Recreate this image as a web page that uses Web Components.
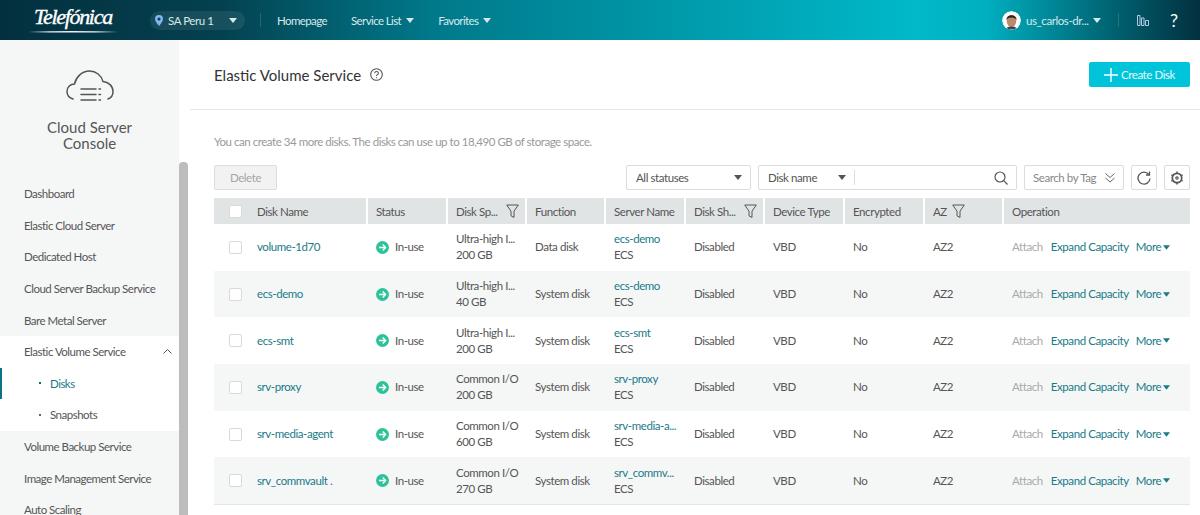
<!DOCTYPE html>
<html lang="en">
<head>
<meta charset="utf-8">
<title>Elastic Volume Service</title>
<style>
  html, body { margin: 0; height: 100%; overflow: hidden; background: #fff; }
  body { display: flex; flex-direction: column; font: 11.5px "Lato", "Liberation Sans", sans-serif; letter-spacing: -.42px; color: #555; }
  .page { display: flex; flex: 1; min-height: 0; }
</style>
</head>
<body>
<tf-header></tf-header>
<div class="page">
  <side-nav title-text="Cloud Server Console">
    <side-item>Dashboard</side-item>
    <side-item>Elastic Cloud Server</side-item>
    <side-item>Dedicated Host</side-item>
    <side-item>Cloud Server Backup Service</side-item>
    <side-item>Bare Metal Server</side-item>
    <side-group label="Elastic Volume Service">
      <side-item sub active>Disks</side-item>
      <side-item sub>Snapshots</side-item>
    </side-group>
    <side-item>Volume Backup Service</side-item>
    <side-item>Image Management Service</side-item>
    <side-item>Auto Scaling</side-item>
  </side-nav>
  <evs-main>
    <disk-table>
      <disk-row name="volume-1d70" kind="Ultra-high I..." size="200 GB" fn="Data disk" server="ecs-demo"></disk-row>
      <disk-row name="ecs-demo" kind="Ultra-high I..." size="40 GB" fn="System disk" server="ecs-demo" striped></disk-row>
      <disk-row name="ecs-smt" kind="Ultra-high I..." size="200 GB" fn="System disk" server="ecs-smt"></disk-row>
      <disk-row name="srv-proxy" kind="Common I/O" size="200 GB" fn="System disk" server="srv-proxy" striped></disk-row>
      <disk-row name="srv-media-agent" kind="Common I/O" size="600 GB" fn="System disk" server="srv-media-a..."></disk-row>
      <disk-row name="srv_commvault ." kind="Common I/O" size="270 GB" fn="System disk" server="srv_commv..." striped></disk-row>
    </disk-table>
  </evs-main>
</div>

<script>
const CARET = `<svg width="8" height="5" viewBox="0 0 8 5" aria-hidden="true"><path d="M0 0h8L4 5z" fill="currentColor"/></svg>`;
const FUNNEL = `<svg width="13" height="15" viewBox="0 0 13 15" fill="none" stroke="#555" aria-hidden="true"><path d="M.7 1h11.6L8 7.2v6.200l-3-1.600V7.2z"/></svg>`;

class TfHeader extends HTMLElement {
  constructor() {
    super();
    this.attachShadow({ mode: "open" });
    this.shadowRoot.innerHTML = `
      <style>
        :host { display: flex; align-items: center; height: 40px; flex: none; color: #d8e8ec;
          background: linear-gradient(90deg, #03303f 0, #04404f 18%, #00798a 36%, #00b9c9 76%, #00b0c1 82%, #00606f 93%, #03303f 100%); }
        .logo { width: 122px; margin-left: 28px; position: relative; height: 40px; }
        .logo b { display: block; font: italic 400 22px/33px "Liberation Serif", serif; color: #fff; letter-spacing: -1.300px; padding-left: 6px; -webkit-text-stroke: .4px #fff; }
        .logo svg { position: absolute; left: 0; top: 30px; }
        .region { display: flex; align-items: center; width: 95px; height: 19px; box-sizing: border-box; padding: 0 8px 0 5px;
          border-radius: 10px; background: rgba(255,255,255,.08); }
        .region span { margin-left: 5px; flex: 1; }
        .sep { width: 1px; height: 14px; background: rgba(255,255,255,.14); }
        nav { display: flex; margin-left: 16px; letter-spacing: -.6px; }
        nav a { display: flex; align-items: center; gap: 5px; margin-right: 24px; }
        .right { display: flex; align-items: center; margin-left: auto; }
        .avatar { width: 19px; height: 19px; border-radius: 50%; margin-right: 5px; }
        .user { width: 67px; white-space: nowrap; }
        .right .sep { margin: 0 18px 0 17px; }
        .help { font-size: 18px; color: #fff; margin: 0 22px 0 21px; letter-spacing: 0; }
      </style>
      <div class="logo"><b>Telefónica</b>
        <svg width="90" height="3" viewBox="0 0 90 3"><path d="M0 2Q45 0 90 2Q45 3 0 2z" fill="#e8f2f4"/></svg>
      </div>
      <div class="region">
        <svg width="8" height="11" viewBox="0 0 8 11"><path d="M4 0a4 4 0 0 1 4 4c0 2.600-4 7-4 7S0 6.600 0 4a4 4 0 0 1 4-4z" fill="#7db8f2"/><circle cx="4" cy="4" r="1.600" fill="#123f50"/></svg>
        <span>SA Peru 1</span>${CARET}
      </div>
      <i class="sep" style="margin-left:15px"></i>
      <nav>
        <a>Homepage</a>
        <a>Service List ${CARET}</a>
        <a>Favorites ${CARET}</a>
      </nav>
      <div class="right">
        <svg class="avatar" viewBox="0 0 19 19">
          <circle cx="9.500" cy="9.500" r="9.500" fill="#fff"/>
          <ellipse cx="9.500" cy="10" rx="4.800" ry="6" fill="#b98a6c"/>
          <path d="M4.400 9C3.800 2.500 15.200 2.500 14.600 9c-1-3-8.500-3.500-10.200 0z" fill="#2b2320"/>
          <path d="M5 16.500c2-1.200 7-1.200 9 0l-1 2H6z" fill="#3c4650"/>
        </svg>
        <span class="user">us_carlos-dr...</span>${CARET}
        <i class="sep"></i>
        <svg width="12" height="12" viewBox="0 0 12 12" fill="none" stroke="#b4c8e6"><path d="M.5 11.500V1.500h2.500v10zM4.500 11.500V4h2.500v7.500zM8.500 11.500V6.500h3v5z"/></svg>
        <span class="help">?</span>
      </div>`;
  }
}

class SideNav extends HTMLElement {
  constructor() {
    super();
    this.attachShadow({ mode: "open" });
    this.shadowRoot.innerHTML = `
      <style>
        :host { display: flex; flex: none; width: 190px; min-height: 0; overflow: hidden; }
        .panel { width: 179px; background: #f5f7f7; overflow: hidden; letter-spacing: -.5px; }
        .head { height: 138px; box-sizing: border-box; padding-top: 30px; text-align: center; color: #555; font-size: 15px; line-height: 16px; letter-spacing: 0; }
        .head svg { display: block; margin: 0 auto 15px; }
        .thumb { width: 9px; margin-top: 122px; background: #bcbcbc; border-radius: 4px 4px 0 0; }
      </style>
      <div class="panel">
        <div class="head">
          <svg width="48" height="34" viewBox="0 0 48 34" fill="none" stroke="#555" stroke-width="1.500" stroke-linecap="round">
            <path d="M7 29C2.500 27.500 1 24 1 21.500c0-4.500 3.500-7.500 7.500-7.500C10 7 16 1 23.500 1c6.500 0 12 4.500 13.500 10.500 5.500.5 10 4.500 10 10 0 3.500-2 6.500-5 7.500"/>
            <path d="M15 19h15M15 24.500h15M15 30h15M33 19h1.500M33 24.500h1.500M33 30h1.500"/>
          </svg>
          Cloud Server<br>Console
        </div>
        <slot></slot>
      </div>
      <div class="thumb"></div>`;
  }
}

class SideItem extends HTMLElement {
  constructor() {
    super();
    this.attachShadow({ mode: "open" });
    this.shadowRoot.innerHTML = `
      <style>
        :host { display: flex; align-items: center; height: 31.6px; padding-left: 24px; color: #555; white-space: nowrap; }
        :host([sub]) { padding-left: 39px; }
        :host([sub])::before { content: ""; width: 2px; height: 2px; margin-right: 9px; background: #666; }
        :host([active]) { color: #197a88; box-shadow: inset 2px 0 0 #0d7284; }
        :host([active])::before { background: #0d6b7c; }
      </style>
      <slot></slot>`;
  }
}

class SideGroup extends HTMLElement {
  constructor() {
    super();
    this.attachShadow({ mode: "open" });
    this.shadowRoot.innerHTML = `
      <style>
        :host { display: block; background: #fff; }
        .label { display: flex; align-items: center; justify-content: space-between; height: 31.6px; padding: 0 7px 0 24px; color: #555; }
      </style>
      <div class="label">
        <span>${this.getAttribute("label")}</span>
        <svg width="9" height="5" viewBox="0 0 9 5" fill="none" stroke="#555"><path d="M.5 4.500l4-4 4 4"/></svg>
      </div>
      <slot></slot>`;
  }
}

class EvsMain extends HTMLElement {
  constructor() {
    super();
    this.attachShadow({ mode: "open" });
    this.shadowRoot.innerHTML = `
      <style>
        :host { display: block; flex: 1; min-width: 0; color: #555; }
        .title { display: flex; align-items: center; justify-content: space-between; height: 70px; box-sizing: border-box;
          padding: 0 10px 0 24px; border-bottom: 1px solid #e8e8e8; }
        h1 { display: flex; align-items: center; gap: 9px; margin: 0; font-size: 15px; font-weight: 400; color: #333; letter-spacing: 0; }
        .create { display: flex; align-items: center; justify-content: center; gap: 3px; width: 101px; height: 25px;
          background: #00c4d9; border-radius: 2px; color: #e6f9fb; }
        .body { padding: 0 10px 0 24px; }
        .note { height: 55px; box-sizing: border-box; padding-top: 25px; line-height: 13px; color: #999; letter-spacing: -.46px; }
        .bar { display: flex; align-items: stretch; height: 25px; margin-bottom: 8px; }
        .box { display: flex; align-items: center; box-sizing: border-box; border: 1px solid #dcdcdc; border-radius: 2px; background: #fff; }
        .del { width: 63px; justify-content: center; background: #f2f2f2; color: #a5a5a5; }
        .status { width: 125px; margin-left: auto; padding: 0 8px 0 9px; justify-content: space-between; }
        .search { width: 259px; margin-left: 7px; padding: 0 8px 0 9px; }
        .search .kind { display: flex; align-items: center; justify-content: space-between; width: 78px; padding-right: 8px; border-right: 1px solid #ddd; height: 15px; }
        .search svg:last-child { margin-left: auto; }
        .tag { width: 100px; margin-left: 7px; padding: 0 8px; justify-content: space-between; color: #888; }
        .icon { width: 26px; margin-left: 7px; justify-content: center; }
        svg { flex: none; }
      </style>
      <div class="title">
        <h1>Elastic Volume Service
          <svg width="13" height="13" viewBox="0 0 13 13" fill="none" stroke="#555" stroke-width="1.100"><circle cx="6.500" cy="6.500" r="5.800"/><path d="M4.700 5.200c0-2.300 3.700-2.300 3.700 0 0 1.500-1.900 1.400-1.900 2.800"/><path d="M6.500 9.200v1" /></svg>
        </h1>
        <div class="create">
          <svg width="14" height="14" viewBox="0 0 14 14" stroke="#fff" stroke-width="1.400"><path d="M7 0v14M0 7h14"/></svg>
          Create Disk
        </div>
      </div>
      <div class="body">
        <div class="note">You can create 34 more disks. The disks can use up to 18,490 GB of storage space.</div>
        <div class="bar">
          <div class="box del">Delete</div>
          <div class="box status">All statuses ${CARET}</div>
          <div class="box search">
            <div class="kind">Disk name ${CARET}</div>
            <svg width="14" height="14" viewBox="0 0 14 14" fill="none" stroke="#555" stroke-width="1.200"><circle cx="6" cy="6" r="5"/><path d="M9.700 9.700L13.500 13.500"/></svg>
          </div>
          <div class="box tag">Search by Tag
            <svg width="10" height="10" viewBox="0 0 10 10" fill="none" stroke="#666"><path d="M.5 .5L5 4.500 9.500 .5M.5 5L5 9 9.500 5"/></svg>
          </div>
          <div class="box icon">
            <svg width="14" height="14" viewBox="0 0 14 14" fill="none" stroke="#555" stroke-width="1.300"><path d="M11.800 3.500A6 6 0 1 0 13 7.500"/><path d="M12.500 .5V4H9" /></svg>
          </div>
          <div class="box icon">
            <svg width="14" height="14" viewBox="0 0 14 14" fill="none" stroke="#555"><circle cx="7" cy="7" r="4.700" stroke-width="1.700"/><circle cx="7" cy="7" r="1.200" stroke-width="1.200"/><path d="M7 .5v2M7 11.500v2M1.400 3.800l1.700 1M10.900 9.200l1.700 1M1.400 10.200l1.700-1M10.900 4.800l1.700-1" stroke-width="1.500"/></svg>
          </div>
        </div>
        <slot></slot>
      </div>`;
  }
}

class DiskTable extends HTMLElement {
  constructor() {
    super();
    this.attachShadow({ mode: "open" });
    const cols = [["Disk Name"], ["Status"], ["Disk Sp...", 1], ["Function"], ["Server Name"], ["Disk Sh...", 1], ["Device Type"], ["Encrypted"], ["AZ", 2], ["Operation"]];
    const cells = cols.map(([label, f], i) => `
      <div class="th${i == 0 ? " first" : ""}${f == 1 ? " spread" : ""}">
        ${i == 0 ? '<i class="check"></i>' : ""}<span>${label}</span>${f ? FUNNEL : ""}
      </div>`).join("");
    this.shadowRoot.innerHTML = `
      <style>
        :host { display: block; --cols: 154px 80px 79px 79px 80px 79px 80px 80px 79px 1fr; border-bottom: 1px solid #e4e6e6; }
        .head { display: grid; grid-template-columns: var(--cols); height: 26px; }
        .th { display: flex; align-items: center; gap: 5px; padding: 0 6px 0 8px; margin-right: 2px; background: #e1e4e5; color: #555; white-space: nowrap; }
        .th svg { flex: none; }
        .th:last-child { margin-right: 0; }
        .spread { justify-content: space-between; }
        .first { padding-left: 15px; gap: 15px; }
        .check { width: 13px; height: 13px; box-sizing: border-box; background: #fff; border: 1px solid #d9d9d9; border-radius: 2px; }
      </style>
      <div class="head">${cells}</div>
      <slot></slot>`;
  }
}

class DiskRow extends HTMLElement {
  constructor() {
    super();
    this.attachShadow({ mode: "open" });
  }

  connectedCallback() {
    const a = (n) => this.getAttribute(n);
    this.shadowRoot.innerHTML = `
      <style>
        :host { display: grid; grid-template-columns: var(--cols); height: 46.7px; align-items: center; background: #fff; color: #555; white-space: nowrap; }
        :host([striped]) { background: #f5f7f7; }
        .td { padding-left: 8px; line-height: 16px; }
        .first { display: flex; align-items: center; gap: 15px; padding-left: 15px; }
        .check { width: 13px; height: 13px; box-sizing: border-box; flex: none; background: #fff; border: 1px solid #d9d9d9; border-radius: 2px; }
        a { color: #197a88; }
        .status { display: flex; align-items: center; gap: 6px; }
        .ops { display: flex; align-items: center; gap: 8px; }
        .ops span { color: #a9a9a9; }
        .more { display: flex; align-items: center; gap: 2px; margin-left: -1px; }
        .more svg { width: 7px; }
      </style>
      <div class="td first"><i class="check"></i><a>${a("name")}</a></div>
      <div class="td status">
        <svg width="13" height="13" viewBox="0 0 13 13"><circle cx="6.500" cy="6.500" r="6.500" fill="#2dc39a"/><path d="M3 6.500h6.500M6.700 3.600l2.900 2.900-2.900 2.900" fill="none" stroke="#fff" stroke-width="1.400"/></svg>
        In-use
      </div>
      <div class="td">${a("kind")}<br>${a("size")}</div>
      <div class="td">${a("fn")}</div>
      <div class="td"><a>${a("server")}</a><br>ECS</div>
      <div class="td">Disabled</div>
      <div class="td">VBD</div>
      <div class="td">No</div>
      <div class="td">AZ2</div>
      <div class="td ops"><span>Attach</span><a>Expand Capacity</a><a class="more">More ${CARET}</a></div>`;
  }
}

customElements.define("tf-header", TfHeader);
customElements.define("side-nav", SideNav);
customElements.define("side-item", SideItem);
customElements.define("side-group", SideGroup);
customElements.define("evs-main", EvsMain);
customElements.define("disk-table", DiskTable);
customElements.define("disk-row", DiskRow);
</script>
</body>
</html>
